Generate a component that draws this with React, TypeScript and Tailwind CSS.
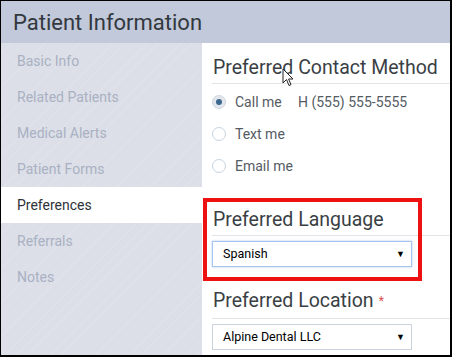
import React from 'react';

const navItems = ['Basic Info', 'Related Patients', 'Medical Alerts', 'Patient Forms', 'Preferences', 'Referrals', 'Notes'];

function Radio({ checked }: { checked?: boolean }) {
  return checked ? (
    <span className="flex h-[14px] w-[14px] items-center justify-center rounded-full border border-[#cdd6df] bg-[#e3e7ed]">
      <span className="h-[6px] w-[6px] rounded-full bg-[#3b678c]" />
    </span>
  ) : (
    <span className="h-[14px] w-[14px] rounded-full border border-[#c5d4e2] bg-white" />
  );
}

function Select({ value, focused }: { value: string; focused?: boolean }) {
  return (
    <div
      className={
        focused
          ? 'flex h-[26px] w-[200px] items-center justify-between border border-[#a6c5f0] bg-white pl-[10px] pr-[6px] text-[12.5px] text-black shadow-[0_0_2px_rgba(120,160,230,0.6)]'
          : 'flex h-[26px] w-[200px] items-center justify-between border border-[#c9d3de] bg-white pl-[10px] pr-[6px] text-[12.5px] text-black'
      }
    >
      <span>{value}</span>
      <span className="text-[9px] leading-none">▼</span>
    </div>
  );
}

export default function App() {
  return (
    <div className="flex h-[357px] w-[452px] flex-col border-l border-t border-r-2 border-b-2 border-black font-['Roboto',sans-serif]">
      <div className="flex h-[42px] shrink-0 items-center bg-[#c1c9da] pl-3 text-[22px] text-[#33383e]">Patient Information</div>
      <div className="flex flex-1 overflow-hidden">
        <div className="w-[201px] shrink-0 bg-[#dcdfe8] bg-[repeating-linear-gradient(135deg,transparent_0_7px,rgba(255,255,255,0.1)_7px_8px)]">
          {navItems.map((item) =>
            item === 'Preferences' ? (
              <div key={item} className="flex h-9 items-center bg-white pl-4 text-[14px] text-[#2e3338]">{item}</div>
            ) : (
              <div key={item} className="flex h-9 items-center pl-4 text-[14px] text-[#a9b1c2]">{item}</div>
            )
          )}
        </div>
        <div className="relative flex-1 bg-white pl-[10px]">
          <div className="border-b border-[#e2e4e8] pt-[13px] pb-[3px] pl-px text-[19.5px] leading-[24px] text-[#3a3f45]">Preferred Contact Method</div>
          <div className="mt-[2px] text-[14px] text-[#555b63]">
            <div className="flex h-8 items-center">
              <Radio checked />
              <span className="ml-[9px] w-[63px]">Call me</span>
              <span>H (555) 555-5555</span>
            </div>
            <div className="flex h-8 items-center">
              <Radio />
              <span className="ml-[9px]">Text me</span>
            </div>
            <div className="flex h-8 items-center">
              <Radio />
              <span className="ml-[9px]">Email me</span>
            </div>
          </div>

          <div className="border-b border-[#e2e4e8] pt-[26px] pb-[3px] pl-px text-[19.5px] leading-[24px] text-[#3a3f45]">Preferred Language</div>
          <div className="mt-[5px]">
            <Select value="Spanish" focused />
          </div>

          <div className="border-b border-[#e2e4e8] pt-[22px] pb-[5px] pl-px text-[19.5px] leading-[24px] text-[#3a3f45]">
            Preferred Location<span className="ml-[5px] align-top text-[12px] text-[#d9534f]">*</span>
          </div>
          <div className="mt-[5px]">
            <Select value="Alpine Dental LLC" />
          </div>

          {/* highlight frame drawn over the language block */}
          <div className="pointer-events-none absolute left-px top-[155px] h-[83px] w-[219px] border-4 border-[#ee1111]" />

          {/* mouse pointer */}
          <svg className="absolute left-[80px] top-[25px]" width="12" height="19" viewBox="0 0 12 19">
            <path d="M1 1 L1 15 L4.5 11.5 L7 17.5 L9 16.6 L6.6 11 L11 11 Z" fill="white" stroke="#222" strokeWidth="1" strokeLinejoin="round" />
          </svg>
        </div>
      </div>
    </div>
  );
}
